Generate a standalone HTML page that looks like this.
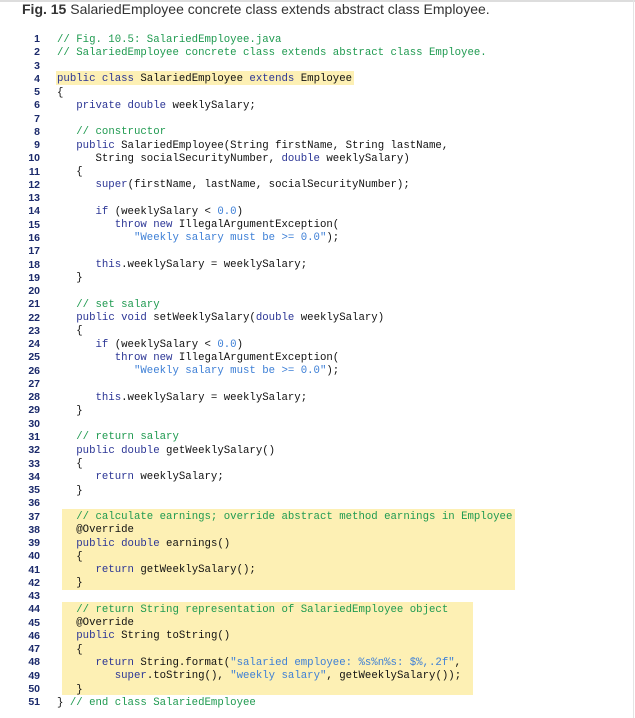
<!DOCTYPE html>
<html><head><meta charset="utf-8"><style>
html,body{margin:0;padding:0;background:#fff;width:635px;height:718px;overflow:hidden;position:relative}
.top{position:absolute;left:0;top:0;width:635px;height:2px;background:#ddd}
.rb{position:absolute;left:633px;top:0;width:1px;height:718px;background:#e4e4e4}
.title{position:absolute;left:22px;top:1px;font:14px "Liberation Sans",sans-serif;color:#333;white-space:nowrap}
.hl{position:absolute;background:#fdf0b4}
.code{position:absolute;left:57px;top:33.5px;font:10.7px/13.28px "Liberation Mono",monospace;color:#111;white-space:pre}
.code div,.nums div{height:13.28px}
.nums{position:absolute;left:0;top:33px;width:40px;text-align:right;font:bold 10.5px/13.28px "Liberation Sans",sans-serif;color:#1b2a6b}
.c{color:#1f9a50}.k{color:#2b3595}.s{color:#3d7fd6}
</style></head><body>
<div class="top"></div><div class="rb"></div>
<div class="title"><b>Fig. 15</b> SalariedEmployee concrete class extends abstract class Employee.</div>
<div class="hl" style="left:56px;top:71px;width:298px;height:14px"></div>
<div class="hl" style="left:62px;top:509px;width:453px;height:81px"></div>
<div class="hl" style="left:62px;top:602px;width:411px;height:93px"></div>
<div class="nums"><div>1</div><div>2</div><div>3</div><div>4</div><div>5</div><div>6</div><div>7</div><div>8</div><div>9</div><div>10</div><div>11</div><div>12</div><div>13</div><div>14</div><div>15</div><div>16</div><div>17</div><div>18</div><div>19</div><div>20</div><div>21</div><div>22</div><div>23</div><div>24</div><div>25</div><div>26</div><div>27</div><div>28</div><div>29</div><div>30</div><div>31</div><div>32</div><div>33</div><div>34</div><div>35</div><div>36</div><div>37</div><div>38</div><div>39</div><div>40</div><div>41</div><div>42</div><div>43</div><div>44</div><div>45</div><div>46</div><div>47</div><div>48</div><div>49</div><div>50</div><div>51</div></div>
<div class="code"><div><span class="c">// Fig. 10.5: SalariedEmployee.java</span></div><div><span class="c">// SalariedEmployee concrete class extends abstract class Employee.</span></div><div></div><div><span class="k">public class</span> SalariedEmployee <span class="k">extends</span> Employee</div><div>{</div><div>   <span class="k">private double</span> weeklySalary;</div><div></div><div>   <span class="c">// constructor</span></div><div>   <span class="k">public</span> SalariedEmployee(String firstName, String lastName,</div><div>      String socialSecurityNumber, <span class="k">double</span> weeklySalary)</div><div>   {</div><div>      <span class="k">super</span>(firstName, lastName, socialSecurityNumber);</div><div></div><div>      <span class="k">if</span> (weeklySalary &lt; <span class="s">0.0</span>)</div><div>         <span class="k">throw new</span> IllegalArgumentException(</div><div>            <span class="s">"Weekly salary must be &gt;= 0.0"</span>);</div><div></div><div>      <span class="k">this</span>.weeklySalary = weeklySalary;</div><div>   }</div><div></div><div>   <span class="c">// set salary</span></div><div>   <span class="k">public void</span> setWeeklySalary(<span class="k">double</span> weeklySalary)</div><div>   {</div><div>      <span class="k">if</span> (weeklySalary &lt; <span class="s">0.0</span>)</div><div>         <span class="k">throw new</span> IllegalArgumentException(</div><div>            <span class="s">"Weekly salary must be &gt;= 0.0"</span>);</div><div></div><div>      <span class="k">this</span>.weeklySalary = weeklySalary;</div><div>   }</div><div></div><div>   <span class="c">// return salary</span></div><div>   <span class="k">public double</span> getWeeklySalary()</div><div>   {</div><div>      <span class="k">return</span> weeklySalary;</div><div>   }</div><div></div><div>   <span class="c">// calculate earnings; override abstract method earnings in Employee</span></div><div>   @Override</div><div>   <span class="k">public double</span> earnings()</div><div>   {</div><div>      <span class="k">return</span> getWeeklySalary();</div><div>   }</div><div></div><div>   <span class="c">// return String representation of SalariedEmployee object</span></div><div>   @Override</div><div>   <span class="k">public</span> String toString()</div><div>   {</div><div>      <span class="k">return</span> String.format(<span class="s">"salaried employee: %s%n%s: $%,.2f"</span>,</div><div>         <span class="k">super</span>.toString(), <span class="s">"weekly salary"</span>, getWeeklySalary());</div><div>   }</div><div>} <span class="c">// end class SalariedEmployee</span></div></div>
</body></html>
